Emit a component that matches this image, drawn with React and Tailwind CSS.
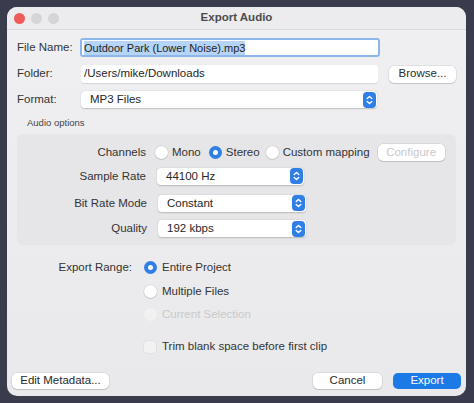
import React from 'react';

const font = { fontFamily: '"Liberation Sans", Arial, sans-serif' };

function Stepper() {
  return (
    <span className="flex h-[16px] w-[13px] items-center justify-center rounded-[4px] bg-[#2f7fe6]">
      <svg width="7" height="10" viewBox="0 0 7 10" fill="none" stroke="white" strokeWidth="1.4" strokeLinecap="round" strokeLinejoin="round">
        <path d="M1.2 3.6 L3.5 1.4 L5.8 3.6" />
        <path d="M1.2 6.4 L3.5 8.6 L5.8 6.4" />
      </svg>
    </span>
  );
}

function Select({ value, className }) {
  return (
    <div className={`flex h-[17px] items-center justify-between rounded-[4px] bg-white pl-[9px] pr-[1px] shadow-[0_0.5px_1.5px_rgba(0,0,0,0.2)] ${className}`}>
      <span className="text-[11.5px] text-[#262626]">{value}</span>
      <Stepper />
    </div>
  );
}

function Radio({ checked, disabled, className = '' }) {
  if (checked) {
    return (
      <span className={`flex h-[13px] w-[13px] shrink-0 items-center justify-center rounded-full bg-[#2f7fe6] ${className}`}>
        <span className="h-[5px] w-[5px] rounded-full bg-white" />
      </span>
    );
  }
  return (
    <span
      className={`block h-[13px] w-[13px] shrink-0 rounded-full ${
        disabled ? 'bg-[#f1f1f2]' : 'bg-white shadow-[0_0_0_0.5px_rgba(0,0,0,0.12),0_1px_1px_rgba(0,0,0,0.1)]'
      } ${className}`}
    />
  );
}

function Button({ children, className, disabled }) {
  return (
    <div
      className={`flex items-center justify-center rounded-[5px] bg-white text-[11.5px] shadow-[0_0_0_0.5px_rgba(0,0,0,0.12),0_1px_1px_rgba(0,0,0,0.12)] ${
        disabled ? 'text-[#c8c8c8]' : 'text-[#2a2a2a]'
      } ${className}`}
    >
      {children}
    </div>
  );
}

export default function App() {
  return (
    <div className="h-[403px] w-[474px] overflow-hidden bg-[#3a3b4c] pl-[7px] pt-[7px]" style={font}>
      <div className="flex h-[389px] w-[459px] flex-col overflow-hidden rounded-[10px] bg-gradient-to-b from-[#f0f0f2] to-[#e9e9eb]">
        {/* barra de título */}
        <div className="relative flex h-[23px] shrink-0 items-center border-b border-[#d9d9db] bg-[#ececee] pl-[7px]">
          <div className="flex gap-[6px]">
            <span className="h-[11px] w-[11px] rounded-full bg-[#ee5b58]" />
            <span className="h-[11px] w-[11px] rounded-full bg-[#d5d5d7]" />
            <span className="h-[11px] w-[11px] rounded-full bg-[#d5d5d7]" />
          </div>
          <span className="absolute left-0 right-0 text-center text-[11.5px] font-bold text-[#4b4b4b]">Export Audio</span>
        </div>

        {/* campos superiores */}
        <div className="flex flex-col px-[10px] pt-[8px] text-[11.5px]">
          <div className="flex items-center">
            <span className="w-[63px] text-[#333]">File Name:</span>
            <div className="flex h-[19px] w-[300px] items-center rounded-[3px] border-2 border-[#8db6ea] bg-white pl-[2px]">
              <span className="bg-[#b6d4f6] text-[11px] leading-[14px] text-[#1e1e1e]">Outdoor Park (Lower Noise).mp3</span>
            </div>
          </div>
          <div className="mt-[8px] flex items-center">
            <span className="w-[64px] text-[#333]">Folder:</span>
            <div className="flex h-[18px] w-[297px] items-center rounded-[3px] bg-white pl-[3px] shadow-[0_0.5px_1px_rgba(0,0,0,0.1)]">
              <span className="text-[11.5px] text-[#262626]">/Users/mike/Downloads</span>
            </div>
            <Button className="ml-[11px] h-[17px] w-[67px]">Browse...</Button>
          </div>
          <div className="mt-[8px] flex items-center">
            <span className="w-[64px] text-[#333]">Format:</span>
            <Select value="MP3 Files" className="w-[296px]" />
          </div>
          <span className="ml-[10px] mt-[8px] text-[9.5px] text-[#444]">Audio options</span>
        </div>

        {/* grupo de opciones de audio */}
        <div className="mx-[10px] mt-[3px] flex h-[111px] flex-col rounded-[6px] bg-[#e6e6e8] pt-[10px] text-[11.5px] text-[#333]">
          <div className="flex h-[18px] items-center">
            <span className="w-[129px] text-right">Channels</span>
            <div className="ml-[9px] flex items-center">
              <Radio />
              <span className="ml-[4px]">Mono</span>
              <Radio checked className="ml-[8px]" />
              <span className="ml-[4px]">Stereo</span>
              <Radio className="ml-[6px]" />
              <span className="ml-[4px]">Custom mapping</span>
              <Button disabled className="ml-[8px] h-[17px] w-[67px]">Configure</Button>
            </div>
          </div>
          <div className="mt-[6px] flex items-center">
            <span className="w-[129px] text-right">Sample Rate</span>
            <Select value="44100 Hz" className="ml-[11px] w-[147px]" />
          </div>
          <div className="mt-[10px] flex items-center">
            <span className="w-[130px] text-right">Bit Rate Mode</span>
            <Select value="Constant" className="ml-[11px] w-[148px]" />
          </div>
          <div className="mt-[8px] flex items-center">
            <span className="w-[130px] text-right">Quality</span>
            <Select value="192 kbps" className="ml-[11px] w-[148px]" />
          </div>
        </div>

        {/* rango de exportación */}
        <div className="mt-[16px] flex flex-col text-[11.5px] text-[#333]">
          <div className="flex h-[14px] items-center">
            <span className="w-[125px] text-right">Export Range:</span>
            <Radio checked className="ml-[12px]" />
            <span className="ml-[5px]">Entire Project</span>
          </div>
          <div className="mt-[10px] flex h-[14px] items-center pl-[137px]">
            <Radio />
            <span className="ml-[5px]">Multiple Files</span>
          </div>
          <div className="mt-[9px] flex h-[14px] items-center pl-[137px]">
            <Radio disabled />
            <span className="ml-[5px] text-[#c9c9c9]">Current Selection</span>
          </div>
          <div className="mt-[18px] flex h-[14px] items-center pl-[137px]">
            <span className="h-[12px] w-[12px] rounded-[3px] bg-[#f2f2f3] shadow-[0_0_0_0.5px_rgba(0,0,0,0.08)]" />
            <span className="ml-[6px]">Trim blank space before first clip</span>
          </div>
        </div>

        {/* botones inferiores */}
        <div className="mt-auto mb-[7px] flex items-center px-[5px]">
          <Button className="h-[16px] w-[97px]">Edit Metadata...</Button>
          <Button className="ml-auto h-[16px] w-[69px]">Cancel</Button>
          <div className="ml-[11px] flex h-[16px] w-[68px] items-center justify-center rounded-[5px] bg-[#1c7ae6] text-[11.5px] text-white">
            Export
          </div>
        </div>
      </div>
    </div>
  );
}
